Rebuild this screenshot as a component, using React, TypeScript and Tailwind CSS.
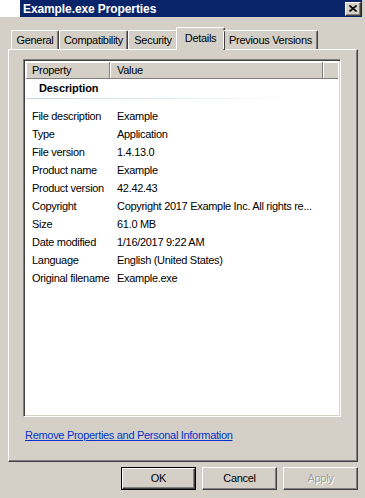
import React from 'react'

const FONT = { fontFamily: '"Liberation Sans", Arial, sans-serif' }

const rows: [string, string][] = [
  ['File description', 'Example'],
  ['Type', 'Application'],
  ['File version', '1.4.13.0'],
  ['Product name', 'Example'],
  ['Product version', '42.42.43'],
  ['Copyright', 'Copyright 2017 Example Inc. All rights re...'],
  ['Size', '61.0 MB'],
  ['Date modified', '1/16/2017 9:22 AM'],
  ['Language', 'English (United States)'],
  ['Original filename', 'Example.exe'],
]

const tabs = [
  { label: 'General', w: 'w-[48px]' },
  { label: 'Compatibility', w: 'w-[69px]' },
  { label: 'Security', w: 'w-[50px]' },
  { label: 'Details', w: 'w-[49px]', active: true },
  { label: 'Previous Versions', w: 'w-[95px]' },
]

function CloseButton() {
  return (
    <div className="flex h-[14px] w-[16px] items-center justify-center border-t border-l border-white border-r border-b border-r-[#404040] border-b-[#404040] bg-[#d4d0c8] shadow-[inset_-1px_-1px_#808080]">
      <svg width="8" height="7" viewBox="0 0 8 7">
        <path d="M0.5 0.5 L7.5 6.5 M7.5 0.5 L0.5 6.5" stroke="#000" strokeWidth="1.6" />
      </svg>
    </div>
  )
}

function Button({ label, isDefault, disabled }: { label: string; isDefault?: boolean; disabled?: boolean }) {
  if (isDefault) {
    return (
      <div className="h-[23px] w-[75px] border border-black">
        <div className="flex h-full w-full items-center justify-center border-t border-l border-white border-r border-b border-r-[#404040] border-b-[#404040] shadow-[inset_-1px_-1px_#808080]">
          {label}
        </div>
      </div>
    )
  }
  return (
    <div className="flex h-[23px] w-[75px] items-center justify-center border-t border-l border-white border-r border-b border-r-[#404040] border-b-[#404040] shadow-[inset_-1px_-1px_#808080]">
      <span className={disabled ? 'text-[#a09d97] [text-shadow:1px_1px_#ffffff]' : ''}>{label}</span>
    </div>
  )
}

export default function App() {
  return (
    <div
      className="flex h-[498px] w-[365px] flex-col overflow-hidden bg-[#d4d0c8] text-[11px] tracking-[-0.3px] text-black"
      style={FONT}
    >
      {/* title bar */}
      <div className="flex h-[17px] shrink-0">
        <div className="w-[20px] bg-white" />
        <div className="flex flex-1 items-center bg-[#0a246a] pl-[3px] pr-[1px]">
          <span className="flex-1 text-[12px] font-bold tracking-[-0.1px] text-white">Example.exe Properties</span>
          <CloseButton />
        </div>
        <div className="w-[3px] bg-[#d4d0c8]" />
      </div>

      <div className="flex flex-1 flex-col pl-[8px] pr-[7px]">
        {/* tabs */}
        <div className="relative z-10 mt-[10px] flex h-[22px] items-end pl-[3px]">
          {tabs.map((t) =>
            t.active ? (
              <div
                key={t.label}
                className={`${t.w} -mx-[2px] -mb-[1px] flex h-[23px] items-center justify-center rounded-t-[2px] border-t border-l border-white border-r border-r-[#404040] bg-[#d4d0c8] pb-[2px] shadow-[inset_-1px_0_#808080]`}
              >
                {t.label}
              </div>
            ) : (
              <div
                key={t.label}
                className={`${t.w} flex h-[19px] items-center justify-center rounded-t-[2px] border-t border-l border-white border-r border-r-[#404040] shadow-[inset_-1px_0_#808080]`}
              >
                {t.label}
              </div>
            )
          )}
        </div>

        {/* panel */}
        <div className="flex h-[413px] flex-col border-t border-l border-white border-r border-b border-r-[#404040] border-b-[#404040] pl-[14px] pt-[9px] shadow-[inset_-1px_-1px_#808080]">
          <div className="flex h-[358px] w-[318px] flex-col border-t border-l border-[#808080] border-r border-b border-r-white border-b-white bg-white shadow-[inset_1px_1px_#404040,inset_-1px_-1px_#d4d0c8] p-[2px]">
            {/* header */}
            <div className="flex h-[17px] shrink-0 bg-[#d4d0c8]">
              <div className="flex w-[84px] items-center border-r border-b border-[#808080] pl-[6px] shadow-[inset_1px_1px_#ffffff]">
                Property
              </div>
              <div className="flex w-[213px] items-center border-r border-b border-[#808080] pl-[7px] shadow-[inset_1px_1px_#ffffff]">
                Value
              </div>
              <div className="flex-1 border-b border-[#808080] shadow-[inset_1px_1px_#ffffff]" />
            </div>

            {/* group */}
            <div className="flex h-[19px] items-center pl-[13px] font-bold tracking-[-0.1px]">Description</div>
            <div className="h-px w-[270px] bg-gradient-to-r from-[#c5d6ea] via-[#dde7f3] to-white" />

            <div className="mt-[8px] flex flex-col">
              {rows.map(([k, v]) => (
                <div key={k} className="flex h-[18px] items-center">
                  <div className="w-[84px] shrink-0 pl-[6px] whitespace-nowrap">{k}</div>
                  <div className="pl-[7px] whitespace-nowrap">{v}</div>
                </div>
              ))}
            </div>
          </div>

          <div className="mt-[11px] flex h-[14px] items-center pl-[2px]">
            <span className="text-[#0033cc] underline">Remove Properties and Personal Information</span>
          </div>
        </div>

        {/* buttons */}
        <div className="mt-[5px] flex justify-end gap-[6px]">
          <Button label="OK" isDefault />
          <Button label="Cancel" />
          <Button label="Apply" disabled />
        </div>
      </div>
    </div>
  )
}
